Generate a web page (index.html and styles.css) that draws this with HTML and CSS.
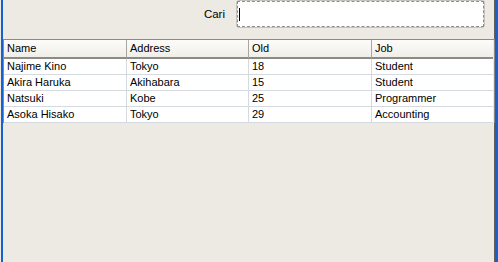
FILE: index.html
```html
<!DOCTYPE html>
<html>
<head>
<meta charset="utf-8">
<link rel="stylesheet" href="styles.css">
</head>
<body>
<div class="frame">
  <div class="content">
    <div class="toolbar">
      <span class="label">Cari</span>
      <div class="search"><div class="focus"><span class="caret"></span></div></div>
    </div>
    <div class="grid">
      <div class="hd">Name</div><div class="hd">Address</div><div class="hd">Old</div><div class="hd last">Job</div>
      <div class="cell">Najime Kino</div><div class="cell">Tokyo</div><div class="cell">18</div><div class="cell last">Student</div>
      <div class="cell">Akira Haruka</div><div class="cell">Akihabara</div><div class="cell">15</div><div class="cell last">Student</div>
      <div class="cell">Natsuki</div><div class="cell">Kobe</div><div class="cell">25</div><div class="cell last">Programmer</div>
      <div class="cell">Asoka Hisako</div><div class="cell">Tokyo</div><div class="cell">29</div><div class="cell last">Accounting</div>
    </div>
  </div>
</div>
</body>
</html>
```
FILE: styles.css
```css
html, body {
  margin: 0;
  padding: 0;
  width: 498px;
  height: 262px;
  background: #edeae3;
  overflow: hidden;
}
.frame {
  height: 262px;
  display: flex;
  margin-left: 1px;
  border-left: 2px solid #1561d0;
  border-right: 3px solid #1561d0;
  box-sizing: border-box;
  font-family: "Liberation Sans", Arial, sans-serif;
  font-size: 11px;
  color: #000;
}
.content {
  flex: 1;
  display: flex;
  flex-direction: column;
  border-right: 1px solid #5f5f5f;
}
.toolbar {
  height: 39px;
  display: flex;
  align-items: flex-start;
  justify-content: flex-end;
  padding-right: 9px;
  box-sizing: border-box;
}
.label {
  margin-top: 8px;
  margin-right: 11px;
  font-size: 11.5px;
}
.search {
  width: 249px;
  height: 28px;
  box-sizing: border-box;
  border: 1px solid #c4c2bc;
  border-radius: 3px;
  background: #fff;
}
.focus {
  height: 26px;
  box-sizing: border-box;
  border: 1px dashed #8d8d8d;
  position: relative;
}
.caret {
  position: absolute;
  left: 1px;
  top: 6px;
  width: 1px;
  height: 13px;
  background: #000;
}
.grid {
  display: grid;
  grid-template-columns: 123px 122px 123px 121px;
  border: 1px solid #8a8a8a;
  border-bottom: none;
  margin-right: -1px;
}
.hd {
  height: 19px;
  line-height: 17px;
  padding-left: 3px;
  background: linear-gradient(#fdfcfa, #f0eee8);
  border-right: 1px solid #a8a6a0;
  border-bottom: 2px solid #8c8a85;
  box-sizing: border-box;
}
.cell {
  height: 16px;
  line-height: 15px;
  padding-left: 3px;
  background: #fff;
  border-right: 1px solid #d5dae1;
  border-bottom: 1px solid #d5dae1;
  box-sizing: border-box;
  white-space: nowrap;
}
.hd.last, .cell.last {
  border-right: none;
}
```
